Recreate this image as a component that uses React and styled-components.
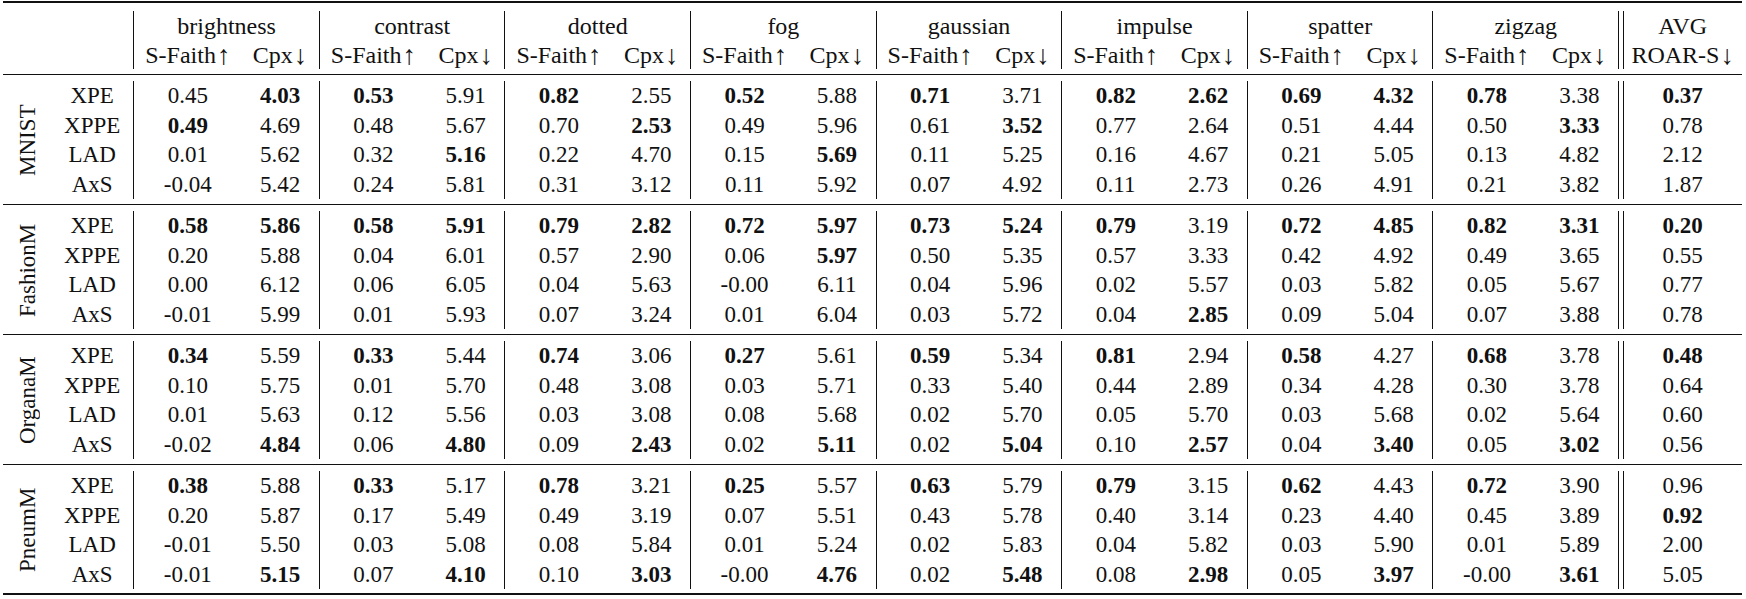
import React from "react";
import styled, { createGlobalStyle } from "styled-components";

const GlobalStyle = createGlobalStyle`
  html, body {
    margin: 0;
    padding: 0;
    background: #ffffff;
  }
  body {
    font-family: "Liberation Serif", "Times New Roman", serif;
    color: #111111;
  }
`;

const COLUMNS = "48px 82.3px repeat(8, 108px 77.6px) 4.6px 119px";

const Wrapper = styled.div`
  padding: 0 0 0 3px;
  width: 1739px;
  font-size: 23px;
`;

const Rule = styled.div`
  padding-top: ${p => p.$above}px;
  padding-bottom: ${p => p.$below}px;

  &::after {
    content: "";
    display: block;
    height: ${p => p.$thick}px;
    background: #111111;
  }
`;

const Grid = styled.div`
  display: grid;
  grid-template-columns: ${COLUMNS};
  grid-auto-rows: ${p => p.$rowHeight}px;
`;

const Cell = styled.div`
  display: flex;
  align-items: center;
  justify-content: center;
  white-space: nowrap;
  box-sizing: border-box;
  line-height: 1;
  font-size: ${p => (p.$head ? "24px" : "inherit")};
  font-weight: ${p => (p.$bold ? 700 : 400)};
  border-left: ${p => (p.$sep ? "1px solid #111111" : "none")};
  grid-column: ${p => (p.$span ? `span ${p.$span}` : "auto")};
  grid-row: ${p => (p.$rows ? `span ${p.$rows}` : "auto")};
`;

const Arrow = styled.span`
  font-size: 27px;
  margin-left: 1px;
  position: relative;
  top: 1px;
`;

const DatasetLabel = styled.div`
  grid-column: 1;
  grid-row: 1 / span 4;
  display: flex;
  align-items: center;
  justify-content: center;
  writing-mode: vertical-rl;
  transform: rotate(180deg);
  white-space: nowrap;
  line-height: 1;
`;

const corruptions = [
  "brightness",
  "contrast",
  "dotted",
  "fog",
  "gaussian",
  "impulse",
  "spatter",
  "zigzag"
];

const data = [
  {
    name: "MNIST",
    rows: [
      ["XPE", "0.45 *4.03 *0.53 5.91 *0.82 2.55 *0.52 5.88 *0.71 3.71 *0.82 *2.62 *0.69 *4.32 *0.78 3.38", "*0.37"],
      ["XPPE", "*0.49 4.69 0.48 5.67 0.70 *2.53 0.49 5.96 0.61 *3.52 0.77 2.64 0.51 4.44 0.50 *3.33", "0.78"],
      ["LAD", "0.01 5.62 0.32 *5.16 0.22 4.70 0.15 *5.69 0.11 5.25 0.16 4.67 0.21 5.05 0.13 4.82", "2.12"],
      ["AxS", "-0.04 5.42 0.24 5.81 0.31 3.12 0.11 5.92 0.07 4.92 0.11 2.73 0.26 4.91 0.21 3.82", "1.87"]
    ]
  },
  {
    name: "FashionM",
    rows: [
      ["XPE", "*0.58 *5.86 *0.58 *5.91 *0.79 *2.82 *0.72 *5.97 *0.73 *5.24 *0.79 3.19 *0.72 *4.85 *0.82 *3.31", "*0.20"],
      ["XPPE", "0.20 5.88 0.04 6.01 0.57 2.90 0.06 *5.97 0.50 5.35 0.57 3.33 0.42 4.92 0.49 3.65", "0.55"],
      ["LAD", "0.00 6.12 0.06 6.05 0.04 5.63 -0.00 6.11 0.04 5.96 0.02 5.57 0.03 5.82 0.05 5.67", "0.77"],
      ["AxS", "-0.01 5.99 0.01 5.93 0.07 3.24 0.01 6.04 0.03 5.72 0.04 *2.85 0.09 5.04 0.07 3.88", "0.78"]
    ]
  },
  {
    name: "OrganaM",
    rows: [
      ["XPE", "*0.34 5.59 *0.33 5.44 *0.74 3.06 *0.27 5.61 *0.59 5.34 *0.81 2.94 *0.58 4.27 *0.68 3.78", "*0.48"],
      ["XPPE", "0.10 5.75 0.01 5.70 0.48 3.08 0.03 5.71 0.33 5.40 0.44 2.89 0.34 4.28 0.30 3.78", "0.64"],
      ["LAD", "0.01 5.63 0.12 5.56 0.03 3.08 0.08 5.68 0.02 5.70 0.05 5.70 0.03 5.68 0.02 5.64", "0.60"],
      ["AxS", "-0.02 *4.84 0.06 *4.80 0.09 *2.43 0.02 *5.11 0.02 *5.04 0.10 *2.57 0.04 *3.40 0.05 *3.02", "0.56"]
    ]
  },
  {
    name: "PneumM",
    rows: [
      ["XPE", "*0.38 5.88 *0.33 5.17 *0.78 3.21 *0.25 5.57 *0.63 5.79 *0.79 3.15 *0.62 4.43 *0.72 3.90", "0.96"],
      ["XPPE", "0.20 5.87 0.17 5.49 0.49 3.19 0.07 5.51 0.43 5.78 0.40 3.14 0.23 4.40 0.45 3.89", "*0.92"],
      ["LAD", "-0.01 5.50 0.03 5.08 0.08 5.84 0.01 5.24 0.02 5.83 0.04 5.82 0.03 5.90 0.01 5.89", "2.00"],
      ["AxS", "-0.01 *5.15 0.07 *4.10 0.10 *3.03 -0.00 *4.76 0.02 *5.48 0.08 *2.98 0.05 *3.97 -0.00 *3.61", "5.05"]
    ]
  }
];

const Value = ({ raw, sep }) => {
  const bold = raw.startsWith("*");
  return (
    <Cell $bold={bold} $sep={sep}>
      {bold ? raw.slice(1) : raw}
    </Cell>
  );
};

const Header = () => (
  <Grid $rowHeight={29}>
    <Cell $span={2} $rows={2} />
    {corruptions.map(c => (
      <Cell key={c} $span={2} $sep $head>
        {c}
      </Cell>
    ))}
    <Cell $rows={2} $sep />
    <Cell $sep $head>AVG</Cell>
    {corruptions.map(c => (
      <React.Fragment key={c}>
        <Cell $sep $head>
          S-Faith<Arrow>↑</Arrow>
        </Cell>
        <Cell $head>
          Cpx<Arrow>↓</Arrow>
        </Cell>
      </React.Fragment>
    ))}
    <Cell $sep $head>
      ROAR-S<Arrow>↓</Arrow>
    </Cell>
  </Grid>
);

const DatasetBlock = ({ dataset }) => (
  <Grid $rowHeight={29.5}>
    <DatasetLabel>{dataset.name}</DatasetLabel>
    {dataset.rows.map(([method, values, avg]) => (
      <React.Fragment key={method}>
        <Cell>{method}</Cell>
        {values.split(" ").map((v, i) => (
          <Value key={i} raw={v} sep={i % 2 === 0} />
        ))}
        <Cell $sep />
        <Value raw={avg} sep />
      </React.Fragment>
    ))}
  </Grid>
);

export default function App() {
  return (
    <>
      <GlobalStyle />
      <Wrapper>
        <Rule $above={1} $below={8} $thick={2} />
        <Header />
        <Rule $above={5} $below={6} $thick={1} />
        {data.map((d, i) => (
          <React.Fragment key={d.name}>
            <DatasetBlock dataset={d} />
            {i < data.length - 1 ? (
              <Rule $above={5} $below={6} $thick={1} />
            ) : (
              <Rule $above={4} $below={2} $thick={2} />
            )}
          </React.Fragment>
        ))}
      </Wrapper>
    </>
  );
}
